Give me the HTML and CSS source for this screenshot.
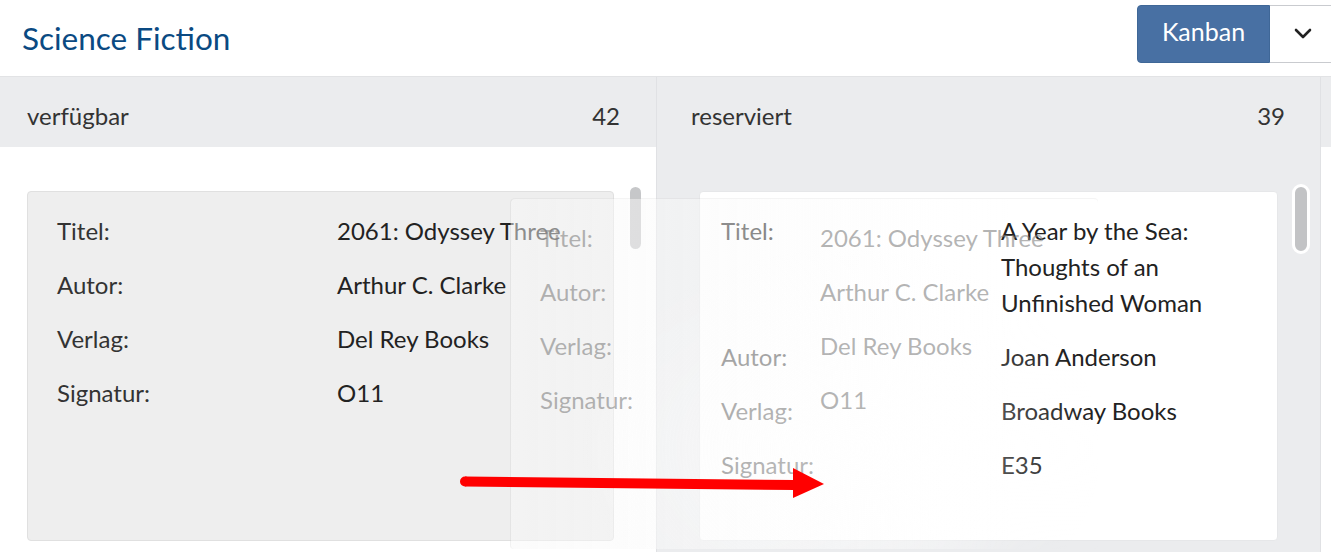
FILE: index.html
```html
<!DOCTYPE html>
<html lang="de">
<head>
<meta charset="utf-8">
<title>Science Fiction</title>
<link rel="stylesheet" href="styles.css">
</head>
<body>
<div class="page">
  <header class="topbar">
    <h1 class="title">Science Fiction</h1>
    <div class="view-switch">
      <button class="btn-primary">Kanban</button>
      <button class="btn-toggle" aria-label="Ansicht wählen">
        <svg width="20" height="12" viewBox="0 0 20 12"><path d="M3 2 L10 9 L17 2" fill="none" stroke="#222" stroke-width="2.6" stroke-linecap="round" stroke-linejoin="round"/></svg>
      </button>
    </div>
  </header>
  <main class="board">
    <section class="column col-available">
      <div class="col-head"><span>verfügbar</span><span>42</span></div>
      <div class="col-body">
        <div class="card card-grey">
          <div class="row"><span class="label">Titel:</span><span class="value">2061: Odyssey Three</span></div>
          <div class="row"><span class="label">Autor:</span><span class="value">Arthur C. Clarke</span></div>
          <div class="row"><span class="label">Verlag:</span><span class="value">Del Rey Books</span></div>
          <div class="row"><span class="label">Signatur:</span><span class="value">O11</span></div>
        </div>
        <div class="scroll"><div class="thumb"></div></div>
      </div>
    </section>
    <section class="column col-reserved">
      <div class="col-head"><span>reserviert</span><span>39</span></div>
      <div class="col-body">
        <div class="card card-white">
          <div class="row"><span class="label">Titel:</span><span class="value">A Year by the Sea: Thoughts of an Unfinished Woman</span></div>
          <div class="row"><span class="label">Autor:</span><span class="value">Joan Anderson</span></div>
          <div class="row"><span class="label">Verlag:</span><span class="value">Broadway Books</span></div>
          <div class="row"><span class="label">Signatur:</span><span class="value">E35</span></div>
        </div>
        <div class="scroll"><div class="thumb thumb-ring"></div></div>
      </div>
    </section>
    <section class="column col-next">
      <div class="col-head"></div>
      <div class="col-body"></div>
    </section>
  </main>

  <div class="ghost">
    <div class="row"><span class="label">Titel:</span><span class="value">2061: Odyssey Three</span></div>
    <div class="row"><span class="label">Autor:</span><span class="value">Arthur C. Clarke</span></div>
    <div class="row"><span class="label">Verlag:</span><span class="value">Del Rey Books</span></div>
    <div class="row"><span class="label">Signatur:</span><span class="value">O11</span></div>
  </div>

  <svg class="arrow" width="380" height="40" viewBox="0 0 380 40">
    <path d="M5 11.5 L335 15 L335 25 L5 21.5 Z" fill="#ff0000"/>
    <circle cx="5" cy="16.5" r="5" fill="#ff0000"/>
    <path d="M333 3 L364 19 L333 33 Z" fill="#ff0000"/>
  </svg>
</div>
</body>
</html>
```
FILE: styles.css
```css
* { box-sizing: border-box; }
html, body { margin: 0; padding: 0; }
body {
  font-family: "Lato", "Liberation Sans", sans-serif;
  color: #333;
  background: #fff;
  width: 1331px;
  height: 552px;
  overflow: hidden;
}
.page { position: relative; width: 1331px; height: 552px; overflow: hidden; }

.topbar {
  height: 77px;
  display: flex;
  align-items: flex-start;
  justify-content: space-between;
  border-bottom: 1px solid #e2e3e5;
}
.title {
  margin: 19px 0 0 22px;
  font-size: 31.5px;
  font-weight: 400;
  color: #0a4a82;
}
.view-switch { display: flex; margin-top: 5px; margin-right: -4px; }
.btn-primary {
  width: 133px;
  height: 58px;
  border: 1px solid #3f6797;
  border-radius: 4px 0 0 4px;
  background: #4870a3;
  color: #fff;
  font-family: inherit;
  font-size: 25px;
  padding: 0 0 6px;
}
.btn-toggle {
  width: 65px;
  height: 58px;
  border: 1px solid #c9cbcf;
  border-left: none;
  background: #fff;
  display: flex;
  align-items: center;
  padding: 0 0 0 23px;
}

.board { display: flex; height: 475px; }
.column { display: flex; flex-direction: column; border-right: 1px solid #e0e1e4; }
.col-available { width: 657px; }
.col-reserved { width: 664px; background: #ebecee; }
.col-next { flex: 1; border-right: none; }
.col-head {
  height: 70px;
  background: #ebecee;
  display: flex;
  align-items: center;
  justify-content: space-between;
  font-size: 24px;
  color: #333;
  padding-top: 6px;
}
.col-available .col-head { padding-left: 27px; padding-right: 36px; }
.col-reserved .col-head { padding-left: 34px; padding-right: 35px; }
.col-body { flex: 1; display: flex; align-items: flex-start; padding-top: 44px; }
.col-available .col-body { padding-left: 27px; background: #fff; }
.col-reserved .col-body { padding-left: 42px; }

.card {
  height: 350px;
  border-radius: 4px;
  padding: 21px 29px 0;
  display: flex;
  flex-direction: column;
  gap: 18px;
}
.card-grey { width: 587px; background: #eeeeee; border: 1px solid #e0e0e0; }
.card-white { width: 579px; background: #fff; border: 1px solid #e6e7e9; padding-left: 21px; }
.row { display: flex; font-size: 24px; line-height: 36px; }
.label { width: 280px; flex: none; color: #333; }
.value { flex: 1; color: #222; }

.scroll { margin-left: 16px; }
.col-reserved .scroll { margin-left: 14px; }
.thumb {
  width: 11px;
  height: 62px;
  margin-top: -4px;
  border-radius: 6px;
  background: #c6c7c9;
}
.thumb-ring {
  width: 18px;
  height: 70px;
  margin-top: -7px;
  border-radius: 9px;
  border: 3px solid #fff;
  background: #c2c3c5;
}

.ghost {
  position: absolute;
  left: 511px;
  top: 199px;
  width: 587px;
  height: 350px;
  border-radius: 4px;
  padding: 21px 29px 0;
  display: flex;
  flex-direction: column;
  gap: 18px;
  background:
    radial-gradient(ellipse 260px 200px at 330px 250px, rgba(255,255,255,0.55), rgba(255,255,255,0) 100%),
    linear-gradient(90deg, rgba(248,248,248,0.5) 0%, rgba(250,250,250,0.45) 40%, rgba(255,255,255,0.15) 75%, rgba(255,255,255,0) 85%);
  box-shadow: -1px 0 0 rgba(200,200,200,0.25), 0 -1px 0 rgba(200,200,200,0.2);
}
.ghost .label, .ghost .value { color: rgba(130, 130, 130, 0.6); }

.arrow { position: absolute; left: 460px; top: 465px; }
```
